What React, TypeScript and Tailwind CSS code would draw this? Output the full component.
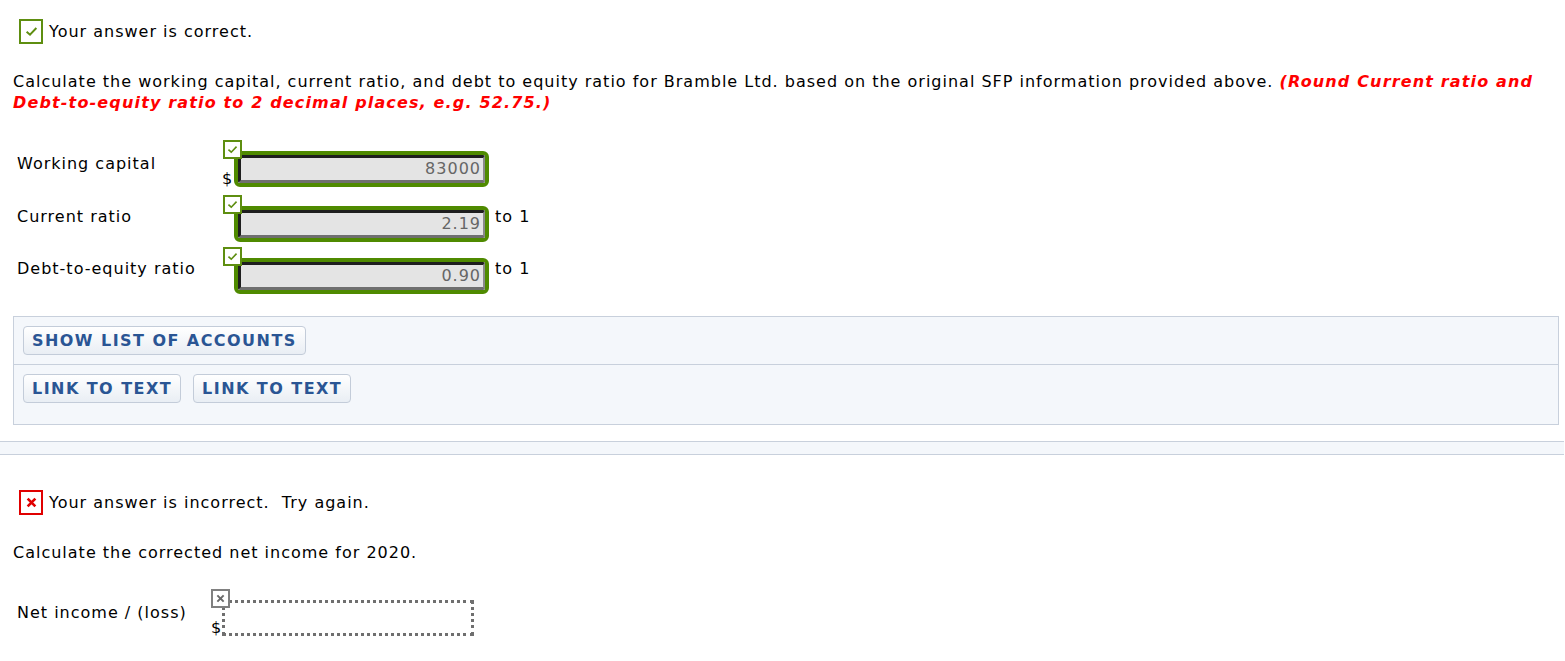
import React from "react";

const font = { fontFamily: '"DejaVu Sans", Verdana, sans-serif' };

function CheckBadge({ small }: { small?: boolean }) {
  return (
    <div
      className={
        small
          ? "w-[19px] h-[19px] border-2 border-[#5e8e10] bg-white flex items-center justify-center"
          : "w-[24px] h-[25px] border-2 border-[#5e8e10] bg-white flex items-center justify-center"
      }
    >
      <svg width={small ? 11 : 13} height={small ? 9 : 11} viewBox="0 0 12 10">
        <path d="M1.5 5.2 L4.6 8 L10.5 1.8" fill="none" stroke="#5e8e10" strokeWidth="1.8" />
      </svg>
    </div>
  );
}

function GreenInput({ value, dollar }: { value: string; dollar?: boolean }) {
  return (
    <div className="flex items-end">
      <div className="w-[12px] text-[16px] leading-[16px] text-black">{dollar ? "$" : ""}</div>
      <div className="relative">
        <div className="absolute left-[-11px] top-[-11px] z-10">
          <CheckBadge small />
        </div>
        <div className="w-[255px] h-[36px] rounded-[6px] border-[4px] border-[#4f8a00] bg-[#4f8a00] overflow-hidden">
          <div className="h-full border-t-[3px] border-l-[3px] border-b-[3px] border-r-[2px] border-t-[#1e1e1e] border-l-[#1e1e1e] border-b-[#6f6f6f] border-r-[#8a8a8a] bg-[#e4e4e4] flex items-center justify-end pr-[2px] text-[16px] text-[#666]">
            {value}
          </div>
        </div>
      </div>
    </div>
  );
}

function Btn({ children }: { children: React.ReactNode }) {
  return (
    <div className="h-[29px] px-[8px] rounded-[4px] border border-[#c3ccd9] bg-gradient-to-b from-white to-[#e9eef4] flex items-center text-[16px] font-bold text-[#2a5594] tracking-[1.45px]">
      {children}
    </div>
  );
}

export default function App() {
  return (
    <div className="bg-white min-h-[661px] w-[1565px] text-black tracking-[1px]" style={font}>
      <div className="pl-[13px] pr-[6px]">
        {/* correct header */}
        <div className="pt-[19px] pl-[6px] flex items-center gap-[6px]">
          <CheckBadge />
          <span className="text-[16px] leading-[20px]">Your answer is correct.</span>
        </div>

        <p className="mt-[27px] text-[16px] leading-[21px]">
          Calculate the working capital, current ratio, and debt to equity ratio for Bramble Ltd. based on the
          original SFP information provided above.{" "}
          <span className="text-[#ff0000] font-bold italic tracking-[1.15px]">
            (Round Current ratio and Debt-to-equity ratio to 2 decimal places, e.g. 52.75.)
          </span>
        </p>

        {/* rows */}
        <div className="pl-[4px]">
          <div className="mt-[38px] flex items-start">
            <div className="w-[205px] pt-[3px] text-[16px] leading-[20px]">Working capital</div>
            <GreenInput value="83000" dollar />
          </div>
          <div className="mt-[19px] flex items-start">
            <div className="w-[205px] pt-[1px] text-[16px] leading-[20px]">Current ratio</div>
            <GreenInput value="2.19" />
            <div className="ml-[6px] pt-[1px] text-[16px] leading-[20px]">to 1</div>
          </div>
          <div className="mt-[16px] flex items-start">
            <div className="w-[205px] pt-[1px] text-[16px] leading-[20px]">Debt-to-equity ratio</div>
            <GreenInput value="0.90" />
            <div className="ml-[6px] pt-[1px] text-[16px] leading-[20px]">to 1</div>
          </div>
        </div>

        {/* panel */}
        <div className="mt-[22px] border border-[#c8d0dc] bg-[#f4f7fb]">
          <div className="px-[9px] pt-[9px] pb-[9px] border-b border-[#c8d0dc] flex">
            <Btn>SHOW LIST OF ACCOUNTS</Btn>
          </div>
          <div className="px-[9px] pt-[9px] pb-[21px] flex gap-[12px]">
            <Btn>LINK TO TEXT</Btn>
            <Btn>LINK TO TEXT</Btn>
          </div>
        </div>
      </div>

      {/* separator band */}
      <div className="mt-[16px] mr-[1px] h-[14px] border-t border-b border-[#c8d0dc] bg-[#f4f7fb]" />

      <div className="pl-[13px]">
        <div className="mt-[35px] pl-[6px] flex items-center gap-[6px]">
          <div className="w-[24px] h-[25px] border-2 border-[#e00000] bg-white flex items-center justify-center">
            <svg width="11" height="11" viewBox="0 0 10 10">
              <path d="M1.5 1.5 L8.5 8.5 M8.5 1.5 L1.5 8.5" stroke="#e00000" strokeWidth="2.4" />
            </svg>
          </div>
          <span className="text-[16px] leading-[20px]">
            Your answer is incorrect.&nbsp; Try again.
          </span>
        </div>

        <p className="mt-[27px] text-[16px] leading-[21px]">Calculate the corrected net income for 2020.</p>

        <div className="pl-[4px] mt-[37px] flex items-start">
          <div className="w-[194px] pt-[3px] text-[16px] leading-[20px]">Net income / (loss)</div>
          <div className="flex items-end">
            <div className="w-[11px] text-[16px] leading-[16px]">$</div>
            <div className="relative">
              <div className="absolute left-[-11px] top-[-11px] z-10 w-[19px] h-[19px] border-2 border-[#808080] bg-white flex items-center justify-center">
                <svg width="9" height="9" viewBox="0 0 10 10">
                  <path d="M1.5 1.5 L8.5 8.5 M8.5 1.5 L1.5 8.5" stroke="#6a6a6a" strokeWidth="2.2" />
                </svg>
              </div>
              <div className="w-[252px] h-[36px] border-[3px] border-dotted border-[#6f6f6f] bg-white" />
            </div>
          </div>
        </div>
      </div>
    </div>
  );
}
